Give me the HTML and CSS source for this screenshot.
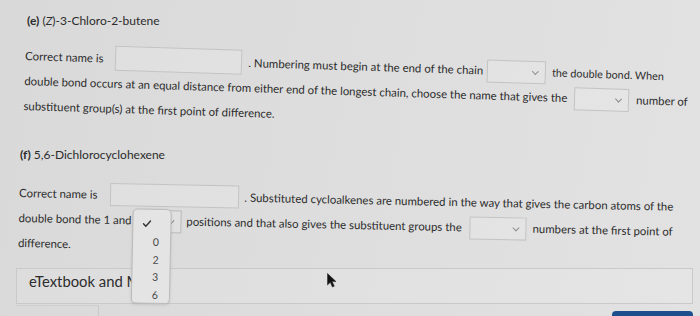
FILE: index.html
```html
<!DOCTYPE html>
<html>
<head>
<meta charset="utf-8">
<title>Naming alkenes</title>
<link rel="stylesheet" href="styles.css">
</head>
<body>
<main class="page">
  <section class="q">
    <h2 class="title title-e"><b>(e)</b> (<i>Z</i>)-3-Chloro-2-butene</h2>
    <p class="body body-e">Correct name is <span class="field field-e"></span>. Numbering must begin at the end of the chain <span class="sel sel-e1"></span> <span class="tight">the double bond. When</span><br>double bond occurs at an equal distance from either end of the longest chain, choose the name that gives the <span class="sel sel-e2"></span> number of<br>substituent group(s) at the first point of difference.</p>
  </section>

  <section class="q">
    <h2 class="title title-f"><b>(f)</b> 5,6-Dichlorocyclohexene</h2>
    <p class="body body-f">Correct name is <span class="field field-f"></span>. Substituted cycloalkenes are numbered in the way that gives the carbon atoms of the<br>double bond the 1 and <span class="sel sel-f1"><span class="menu"><span class="opt opt-check"><svg class="check" width="9" height="8" viewBox="0 0 9 8"><path d="M1 4.2 L3.4 6.6 L8 1.2" fill="none" stroke="#333" stroke-width="1.4" stroke-linecap="round" stroke-linejoin="round"/></svg></span><span class="opt">0</span><span class="opt">2</span><span class="opt">3</span><span class="opt">6</span></span></span> positions and that also gives the substituent groups the <span class="sel sel-f2"></span> numbers at the first point of<br>difference.</p>
  </section>

  <div class="textbook">eTextbook and Media</div>

  <div class="foot">
    <div class="tab"></div>
    <div class="btn"></div>
  </div>

  <svg class="cursor" width="10" height="15" viewBox="0 0 10 15"><path d="M0.5 0.5 L0.5 12 L3.3 9.3 L5.4 14 L7.3 13.2 L5.2 8.6 L9 8.6 Z" fill="#111" stroke="#333" stroke-width="0.6"/></svg>
</main>
</body>
</html>
```

FILE: styles.css
```css
html, body {
  margin: 0;
  padding: 0;
}

body {
  width: 700px;
  height: 316px;
  overflow: hidden;
  background: linear-gradient(100deg, #d9d9d9 0%, #dedede 55%, #e2e2e2 100%);
  font-family: Lato, "Open Sans", "Liberation Sans", sans-serif;
  color: #2c2c2c;
}

.page {
  position: relative;
  height: 316px;
  box-sizing: border-box;
  padding-top: 13px;
}

.title {
  margin: 0;
  font-size: 12px;
  line-height: 16px;
  font-weight: normal;
  white-space: nowrap;
}

.title b {
  font-weight: 700;
}

.title-e {
  padding-left: 27px;
}

.title-f {
  margin-top: 29px;
  padding-left: 20px;
}

.body {
  margin: 0;
  font-size: 11.4px;
  line-height: 25px;
  white-space: nowrap;
}

.body-e {
  margin-top: 14px;
  padding-left: 25px;
  transform: rotate(1.8deg);
  transform-origin: 25px 17px;
}

.tight {
  font-size: 10.8px;
}

.body-f {
  margin-top: 17px;
  padding-left: 19px;
  transform: rotate(1.2deg);
  transform-origin: 19px 17px;
}

/* text inputs and selects: empty inline boxes, baseline = bottom margin edge */
.field,
.sel {
  display: inline-block;
  position: relative;
  box-sizing: border-box;
  border: 1px solid #c3c3c3;
  background: rgba(255, 255, 255, 0.14);
  vertical-align: baseline;
}

.field-e {
  width: 127px;
  height: 25px;
  margin: 0 6px -8px 9px;
}

.field-f {
  width: 129px;
  height: 23px;
  margin: 0 5px -7px 10px;
}

.sel {
  height: 23px;
  margin-bottom: -8px;
}

.sel::after {
  content: "";
  position: absolute;
  right: 7px;
  top: 7px;
  width: 4px;
  height: 4px;
  border-right: 1.2px solid #8c8c8c;
  border-bottom: 1.2px solid #8c8c8c;
  transform: rotate(45deg);
}

.sel-e1 {
  width: 59px;
  margin-left: 1px;
  margin-right: 3px;
}

.sel-e2 {
  width: 55px;
  margin-left: 4px;
  margin-right: 4px;
}

.sel-f1 {
  width: 39px;
  margin-left: 8px;
  margin-right: 2px;
  border-color: #b9b9b9;
}

.sel-f2 {
  width: 57px;
  margin-left: 5px;
  margin-right: 3px;
}

/* open dropdown of the first select in (f) */
.menu {
  position: absolute;
  left: -11px;
  top: -2px;
  width: 39px;
  height: 95px;
  box-sizing: border-box;
  padding-top: 4px;
  background: #e4e4e4;
  border: 1px solid #bcbcbc;
  border-radius: 5px;
  box-shadow: 0 1px 3px rgba(0, 0, 0, 0.12);
  z-index: 2;
}

.opt {
  display: block;
  height: 17.5px;
  line-height: 17.5px;
  padding-left: 9px;
  text-align: center;
  font-size: 10.5px;
  color: #444;
}

.opt-check {
  height: 20px;
  text-align: left;
  padding-left: 9px;
  line-height: 0;
}

.check {
  margin-top: 6px;
}

.textbook {
  margin: 13px 7px 0 16px;
  height: 36px;
  box-sizing: border-box;
  border: 1px solid #c9c9c9;
  background: rgba(255, 255, 255, 0.1);
  padding: 2px 0 0 12px;
  font-size: 14.8px;
  line-height: 20px;
  white-space: nowrap;
  overflow: hidden;
}

.foot {
  display: flex;
  justify-content: space-between;
  align-items: flex-start;
  margin: 1px 7px 0 16px;
}

.tab {
  width: 82px;
  height: 14px;
  border-top: 1px solid #cfcfcf;
  border-right: 1px solid #c9c9c9;
}

.btn {
  width: 81px;
  height: 12px;
  margin-top: 6px;
  background: #1c4f8b;
  border-radius: 4px 4px 0 0;
}

.cursor {
  position: absolute;
  left: 327px;
  top: 273px;
}
```
